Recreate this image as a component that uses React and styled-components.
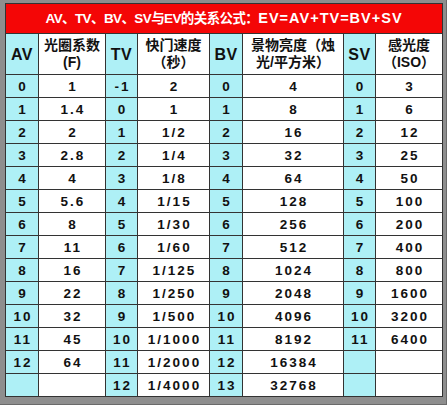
import React from 'react';
import styled, { createGlobalStyle } from 'styled-components';

const GlobalStyle = createGlobalStyle`
  html, body { margin: 0; padding: 0; background: #fff; }
  body { font-family: "Liberation Sans", Arial, "Noto Sans CJK SC", sans-serif; }
`;

const Frame = styled.div`
  width: 447px;
  height: 405px;
  box-sizing: border-box;
  padding: 3px 5px 5px 5px;
  background: #8e8e8e;
  border-right: 1px solid #6a6a6a;
  border-bottom: 1px solid #6a6a6a;
  overflow: hidden;
`;

const Table = styled.table`
  width: 437px;
  table-layout: fixed;
  border-collapse: collapse;
  background: #fff;
  color: #111;
`;

const Row = styled.tr`
  height: ${p => p.$h}px;
`;

const TitleCell = styled.th`
  padding: 0;
  background: #f40606;
  color: #fff;
  font-weight: 700;
  line-height: 16px;
  text-align: center;
  border: 1px solid #333;
  white-space: nowrap;
`;

const Prefix = styled.span`
  font-size: 13.5px;
  letter-spacing: -0.6px;
`;

const Formula = styled.span`
  letter-spacing: 1px;
  font-size: 14.5px;
`;

const HeadCell = styled.th`
  padding: 0;
  background: ${p => (p.$cyan ? '#aef0f6' : '#fff')};
  border: 1px solid #333;
  text-align: center;
  vertical-align: middle;
  font-size: ${p => (p.$cyan ? '16px' : '14px')};
  font-weight: 700;
  line-height: 17px;
  letter-spacing: ${p => (p.$cyan ? '0.5px' : '0')};
  font-family: ${p => (p.$cyan ? '"Liberation Sans", Arial, sans-serif' : '"Liberation Sans", "Noto Sans CJK SC", sans-serif')};
  white-space: nowrap;
`;

const Cell = styled.td`
  padding: 0;
  background: ${p => (p.$cyan ? '#aef0f6' : '#fff')};
  border: 1px solid #333;
  text-align: center;
  vertical-align: middle;
  font-size: 13.5px;
  font-weight: 700;
  line-height: 15px;
  letter-spacing: 2px;
  text-indent: 2px;
  white-space: nowrap;
`;

const widths = [33, 67, 32, 72, 33, 101, 32, 67];

const av = ['0', '1', '2', '3', '4', '5', '6', '7', '8', '9', '10', '11', '12', ''];
const fNum = ['1', '1.4', '2', '2.8', '4', '5.6', '8', '11', '16', '22', '32', '45', '64', ''];
const tv = ['-1', '0', '1', '2', '3', '4', '5', '6', '7', '8', '9', '10', '11', '12'];
const speed = ['2', '1', '1/2', '1/4', '1/8', '1/15', '1/30', '1/60', '1/125', '1/250', '1/500', '1/1000', '1/2000', '1/4000'];
const bv = ['0', '1', '2', '3', '4', '5', '6', '7', '8', '9', '10', '11', '12', '13'];
const lux = ['4', '8', '16', '32', '64', '128', '256', '512', '1024', '2048', '4096', '8192', '16384', '32768'];
const sv = ['0', '1', '2', '3', '4', '5', '6', '7', '8', '9', '10', '11', '', ''];
const iso = ['3', '6', '12', '25', '50', '100', '200', '400', '800', '1600', '3200', '6400', '', ''];

export default function App() {
  return (
    <>
      <GlobalStyle />
      <Frame>
        <Table>
          <colgroup>
            {widths.map((w, i) => <col key={i} style={{ width: w }} />)}
          </colgroup>
          <thead>
            <Row $h={30}>
              <TitleCell colSpan={8}>
                <Prefix>AV、TV、BV、SV与EV的关系公式：</Prefix>
                <Formula>EV=AV+TV=BV+SV</Formula>
              </TitleCell>
            </Row>
            <Row $h={41}>
              <HeadCell $cyan>AV</HeadCell>
              <HeadCell>光圈系数<br />(F)</HeadCell>
              <HeadCell $cyan>TV</HeadCell>
              <HeadCell>快门速度<br />（秒）</HeadCell>
              <HeadCell $cyan>BV</HeadCell>
              <HeadCell>景物亮度（烛<br />光/平方米）</HeadCell>
              <HeadCell $cyan>SV</HeadCell>
              <HeadCell>感光度<br />（ISO）</HeadCell>
            </Row>
          </thead>
          <tbody>
            {av.map((_, i) => (
              <Row key={i} $h={23}>
                <Cell $cyan>{av[i]}</Cell>
                <Cell>{fNum[i]}</Cell>
                <Cell $cyan>{tv[i]}</Cell>
                <Cell>{speed[i]}</Cell>
                <Cell $cyan>{bv[i]}</Cell>
                <Cell>{lux[i]}</Cell>
                <Cell $cyan>{sv[i]}</Cell>
                <Cell>{iso[i]}</Cell>
              </Row>
            ))}
          </tbody>
        </Table>
      </Frame>
    </>
  );
}
